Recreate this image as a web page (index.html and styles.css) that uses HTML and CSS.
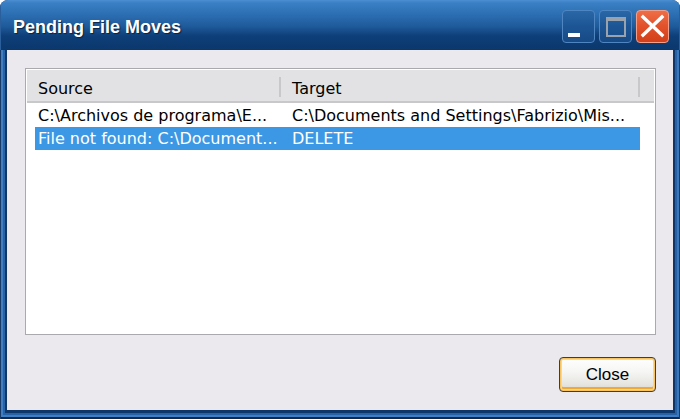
FILE: index.html
```html
<!DOCTYPE html>
<html>
<head>
<meta charset="utf-8">
<link rel="stylesheet" href="styles.css">
</head>
<body>
<div class="window">
  <div class="titlebar">
    <span class="title">Pending File Moves</span>
    <div class="controls">
      <div class="cbtn blue">
        <svg width="33" height="33" viewBox="0 0 33 33"><rect x="6" y="23" width="12" height="4" fill="#ffffff"/></svg>
      </div>
      <div class="cbtn blue">
        <svg width="33" height="33" viewBox="0 0 33 33"><rect x="8" y="8" width="18" height="18" fill="none" stroke="#9aa3ad" stroke-width="2"/><rect x="8" y="8" width="18" height="3" fill="#9aa3ad"/></svg>
      </div>
      <div class="cbtn red">
        <svg width="33" height="33" viewBox="0 0 33 33"><path d="M7 7 L26 25 M26 7 L7 25" stroke="#ffffff" stroke-width="3.4" stroke-linecap="square"/></svg>
      </div>
    </div>
  </div>
  <div class="frame">
    <div class="client">
      <div class="list">
        <div class="header">
          <div class="hcol hsrc">Source</div>
          <div class="hcol htgt">Target</div>
          <div class="hrest"></div>
        </div>
        <div class="rows">
          <div class="row">
            <span class="cell csrc">C:\Archivos de programa\E...</span>
            <span class="cell ctgt">C:\Documents and Settings\Fabrizio\Mis...</span>
          </div>
          <div class="row sel">
            <span class="cell csrc">File not found: C:\Document...</span>
            <span class="cell ctgt">DELETE</span>
          </div>
        </div>
      </div>
      <div class="actions">
        <div class="btn">Close</div>
      </div>
    </div>
  </div>
</div>
</body>
</html>
```
FILE: styles.css
```css
html, body {
  margin: 0;
  padding: 0;
  background: #ffffff;
}
.window {
  width: 680px;
  height: 419px;
  display: flex;
  flex-direction: column;
  border-radius: 8px 8px 0 0;
  overflow: hidden;
  background: #0f3668;
}
.titlebar {
  height: 50px;
  flex: none;
  display: flex;
  justify-content: space-between;
  align-items: flex-start;
  background: linear-gradient(to bottom, #4c8fd2 0px, #3a7fc4 3px, #2d6fb3 14px, #1f5b9b 26px, #0e3f78 36px, #0b386c 50px);
  box-shadow: inset 1px 0 #2a5f9c, inset -1px 0 #2a5f9c;
}
.title {
  margin: 17px 0 0 13px;
  font-family: "Liberation Sans", Arial, sans-serif;
  font-weight: bold;
  font-size: 18px;
  line-height: 20px;
  color: #ffffff;
  text-shadow: 1px 1px 1px #0a2448;
}
.controls {
  display: flex;
  gap: 4px;
  margin: 10px 11px 0 0;
}
.cbtn {
  width: 33px;
  height: 33px;
  box-sizing: border-box;
  border-radius: 4px;
  position: relative;
  overflow: hidden;
}
.cbtn svg {
  position: absolute;
  left: -1px;
  top: -1px;
}
.cbtn.blue {
  border: 1px solid #4f86c2;
  background: linear-gradient(to bottom, #2a67a8 0%, #1d5594 50%, #174a86 100%);
}
.cbtn.red {
  border: 1px solid #f3a08a;
  background: linear-gradient(to bottom, #ef6e47 0%, #e1512a 50%, #d23f1a 100%);
}
.frame {
  flex: 1;
  display: flex;
  padding: 0 7px 9px 7px;
  background: #0f3668;
  box-shadow:
    inset 1px 0 #173a66,
    inset -1px 0 #173a66,
    inset 0 -2px #0b2a52,
    inset 3px 0 #3f7ec2,
    inset -3px 0 #3a78bc,
    inset 0 -4px #3f7ec2,
    inset 5px 0 #2862a6,
    inset -5px 0 #2862a6,
    inset 0 -6px #2862a6;
}
.client {
  flex: 1;
  background: #ebe9ed;
  padding: 18px 17px 18px 18px;
  display: flex;
  flex-direction: column;
}
.list {
  height: 267px;
  box-sizing: border-box;
  border: 1px solid #aaa9ae;
  padding: 1px;
  background: #ffffff;
  font-family: "DejaVu Sans", Tahoma, sans-serif;
  font-size: 16px;
  color: #000000;
}
.header {
  display: flex;
  height: 33px;
  box-sizing: border-box;
  background: #e2e2e4;
  border-bottom: 2px solid #c8c8ca;
}
.hcol {
  position: relative;
  box-sizing: border-box;
  padding: 7px 0 0 11px;
  line-height: 24px;
  white-space: nowrap;
}
.hcol::after {
  content: "";
  position: absolute;
  right: 0;
  top: 7px;
  bottom: 4px;
  width: 2px;
  background: #c8c8ca;
}
.hsrc { width: 254px; }
.htgt { width: 359px; }
.hrest { flex: 1; }
.rows {
  padding: 1px 0 0 8px;
}
.row {
  display: flex;
  width: 605px;
  height: 23px;
  box-sizing: border-box;
  white-space: nowrap;
  border: 1px dotted transparent;
}
.row.sel {
  background: #3c98e4;
  color: #ffffff;
  border: 1px dotted #c8742a;
}
.cell {
  display: block;
  overflow: hidden;
  line-height: 21px;
}
.csrc {
  width: 244px;
  padding-left: 2px;
}
.ctgt {
  padding-left: 10px;
}
.actions {
  display: flex;
  justify-content: flex-end;
  margin-top: 22px;
}
.btn {
  width: 97px;
  height: 35px;
  box-sizing: border-box;
  border: 1px solid #3c3c44;
  border-radius: 4px;
  background: linear-gradient(to bottom, #ffffff 0%, #f6f6f4 40%, #e6e5e0 80%, #d6d5d0 100%);
  box-shadow: inset 0 0 0 1px #f7c35e, inset 0 0 0 2px #f9d889, inset 0 -2px 0 2px #f0a838;
  display: flex;
  align-items: center;
  justify-content: center;
  font-family: "Liberation Sans", Arial, sans-serif;
  font-size: 17px;
  color: #000000;
  padding-top: 1px;
}
```
